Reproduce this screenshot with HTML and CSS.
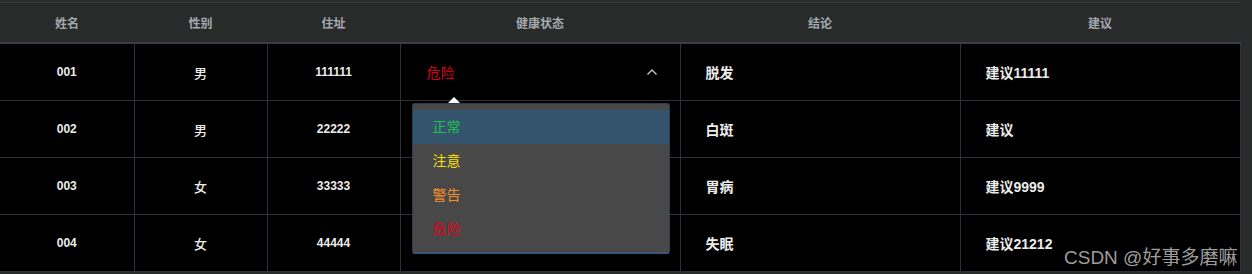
FILE: index.html
```html
<!DOCTYPE html>
<html lang="zh">
<head>
<meta charset="utf-8">
<link rel="stylesheet" href="styles.css">
</head>
<body>
<div class="page">
  <div class="table-wrap">
    <table class="grid">
      <colgroup>
        <col class="c1"><col class="c2"><col class="c3"><col class="c4"><col class="c5"><col class="c6">
      </colgroup>
      <thead>
        <tr><th>姓名</th><th>性别</th><th>住址</th><th>健康状态</th><th>结论</th><th>建议</th></tr>
      </thead>
      <tbody>
        <tr>
          <td>001</td><td class="sex">男</td><td>111111</td>
          <td class="status">
            <div class="select">
              <span class="danger">危险</span>
              <svg class="caret" width="12" height="8" viewBox="0 0 12 8"><path d="M1.5 6.5 L6 2 L10.5 6.5" fill="none" stroke="#c4c4c4" stroke-width="1.4"/></svg>
            </div>
            <div class="dropdown">
              <div class="arrow"></div>
              <ul class="options">
                <li class="opt ok active">正常</li>
                <li class="opt warn">注意</li>
                <li class="opt alert">警告</li>
                <li class="opt danger">危险</li>
              </ul>
            </div>
          </td>
          <td class="left">脱发</td><td class="left">建议11111</td>
        </tr>
        <tr><td>002</td><td class="sex">男</td><td>22222</td><td class="status"></td><td class="left">白斑</td><td class="left">建议</td></tr>
        <tr><td>003</td><td class="sex">女</td><td>33333</td><td class="status"></td><td class="left">胃病</td><td class="left">建议9999</td></tr>
        <tr><td>004</td><td class="sex">女</td><td>44444</td><td class="status"></td><td class="left">失眠</td><td class="left">建议21212</td></tr>
      </tbody>
    </table>
  </div>
  <div class="watermark">CSDN @好事多磨嘛</div>
</div>
</body>
</html>
```
FILE: styles.css
```css
html, body {
  margin: 0;
  padding: 0;
  background: #2a2b2b;
  font-family: "Liberation Sans", "Noto Sans CJK SC", sans-serif;
}
.page {
  position: relative;
  width: 1252px;
  height: 274px;
  overflow: hidden;
}
.table-wrap {
  width: 1240px;
  padding-top: 2px;
}
.grid {
  width: 1240px;
  border-collapse: collapse;
  table-layout: fixed;
  border-top: 1px solid #3b3b3e;
  border-bottom: 1px solid #3e3e46;
}
.c1 { width: 134px; }
.c2 { width: 133px; }
.c3 { width: 133px; }
.c4 { width: 280px; }
.c5 { width: 280px; }
.c6 { width: 280px; }
th {
  height: 39px;
  padding: 0;
  background: #292a2a;
  color: #a3a9af;
  font-size: 12px;
  font-weight: bold;
  text-align: center;
  border-bottom: 2px solid #3d3d47;
}
td {
  height: 56px;
  padding: 0;
  background: #000;
  color: #ececec;
  font-size: 12px;
  font-weight: bold;
  text-align: center;
  border: 1px solid #30303a;
  border-top: none;
}
td:first-child { border-left: none; }
td.sex {
  font-size: 13px;
  font-weight: 500;
}
td.left {
  text-align: left;
  padding-left: 25px;
  font-size: 14px;
}
td.status {
  position: relative;
  text-align: left;
}
.select {
  display: flex;
  align-items: center;
  justify-content: space-between;
  padding: 0 22px 0 26px;
  font-size: 14px;
  font-weight: normal;
}
.danger { color: #d7001a; }
.dropdown {
  position: absolute;
  left: 11px;
  top: 59px;
  width: 258px;
  z-index: 2;
}
.arrow {
  position: absolute;
  left: 36px;
  top: -6px;
  width: 0;
  height: 0;
  border-left: 6px solid transparent;
  border-right: 6px solid transparent;
  border-bottom: 6px solid #ffffff;
}
.options {
  list-style: none;
  margin: 0;
  padding: 6px 0 6px;
  background: #484848;
  border: 1px solid #2e3e50;
  border-bottom: 2px solid #3a5676;
  border-radius: 3px;
}
.opt {
  height: 34px;
  line-height: 34px;
  padding-left: 20px;
  font-size: 14px;
  font-weight: normal;
}
.opt.active { background: #34546e; }
.ok { color: #22c04c; }
.warn { color: #ffe100; }
.alert { color: #f59028; }
.opt.danger { color: #e0001c; }
.watermark {
  position: absolute;
  left: 1064px;
  top: 242px;
  font-size: 19px;
  color: rgba(200, 200, 200, 0.8);
  font-family: "Liberation Sans", "Noto Sans CJK SC", sans-serif;
  white-space: nowrap;
}
```
